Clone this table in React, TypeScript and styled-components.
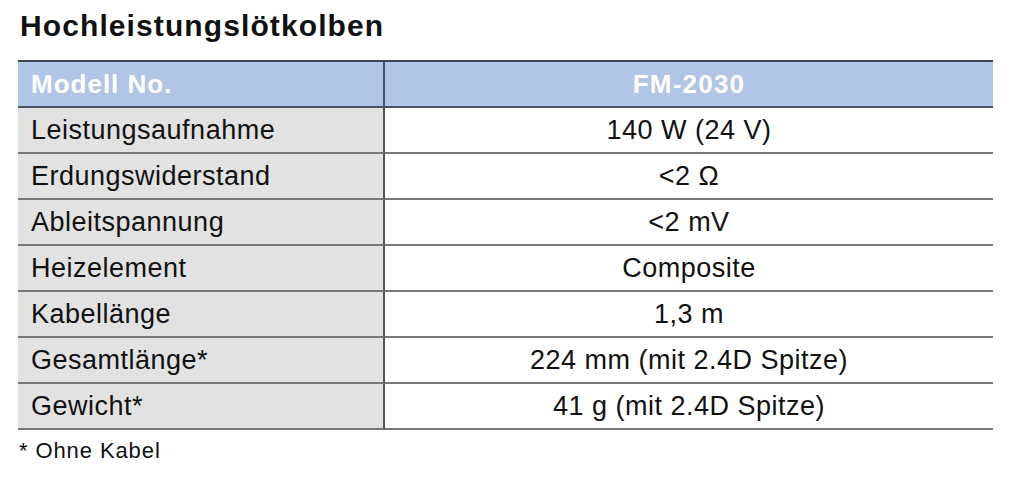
import React from "react";
import styled, { createGlobalStyle } from "styled-components";

const Global = createGlobalStyle`
  html, body { margin: 0; padding: 0; background: #ffffff; }
  body { font-family: "Liberation Sans", Arial, sans-serif; color: #111; }
`;

const Page = styled.div`
  width: 1024px;
  height: 478px;
  box-sizing: border-box;
  padding: 11px 31px 0 18px;
  display: flex;
  flex-direction: column;
`;

const Title = styled.h1`
  margin: 0 0 19px 2px;
  font-size: 30px;
  line-height: 30px;
  letter-spacing: 1.1px;
  font-weight: 700;
  color: #111;
`;

const Table = styled.div`
  display: grid;
  grid-template-columns: 367px 1fr;
  border-top: 2px solid #3d4457;
`;

const HeadCell = styled.div<{ $center?: boolean }>`
  background: #b1c5e7;
  color: #ffffff;
  font-weight: 700;
  font-size: 26px;
  letter-spacing: ${(p) => (p.$center ? "1.2px" : "1px")};
  height: 44px;
  display: flex;
  align-items: center;
  justify-content: ${(p) => (p.$center ? "center" : "flex-start")};
  padding-left: ${(p) => (p.$center ? "0" : "13px")};
  border-bottom: 2px solid #4a5163;
  border-right: ${(p) => (p.$center ? "none" : "2px solid #4a5163")};
`;

const Cell = styled.div<{ $label?: boolean }>`
  background: ${(p) => (p.$label ? "#e2e2e2" : "#ffffff")};
  font-size: 27px;
  letter-spacing: 0.5px;
  height: 44px;
  display: flex;
  align-items: center;
  justify-content: ${(p) => (p.$label ? "flex-start" : "center")};
  padding-left: ${(p) => (p.$label ? "13px" : "0")};
  border-bottom: 2px solid #777777;
  border-right: ${(p) => (p.$label ? "2px solid #555555" : "none")};
  color: #111;
`;

const Note = styled.div`
  margin: 10px 0 0 1px;
  font-size: 22px;
  line-height: 22px;
  letter-spacing: 0.9px;
  color: #111;
`;

const rows: [string, string][] = [
  ["Leistungsaufnahme", "140 W (24 V)"],
  ["Erdungswiderstand", "<2 Ω"],
  ["Ableitspannung", "<2 mV"],
  ["Heizelement", "Composite"],
  ["Kabellänge", "1,3 m"],
  ["Gesamtlänge*", "224 mm (mit 2.4D Spitze)"],
  ["Gewicht*", "41 g (mit 2.4D Spitze)"],
];

export default function App() {
  return (
    <>
      <Global />
      <Page>
        <Title>Hochleistungslötkolben</Title>
        <Table>
          <HeadCell>Modell No.</HeadCell>
          <HeadCell $center>FM-2030</HeadCell>
          {rows.map(([l, v]) => (
            <React.Fragment key={l}>
              <Cell $label>{l}</Cell>
              <Cell>{v}</Cell>
            </React.Fragment>
          ))}
        </Table>
        <Note>* Ohne Kabel</Note>
      </Page>
    </>
  );
}
